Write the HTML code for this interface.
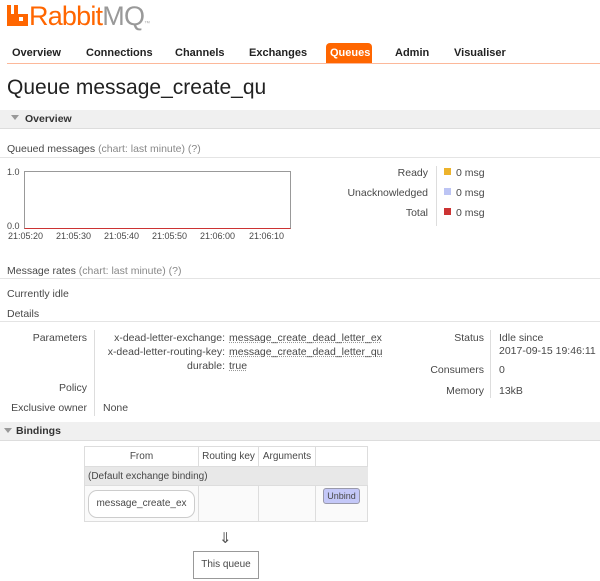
<!DOCTYPE html>
<html><head><meta charset="utf-8"><style>
body{margin:0;width:600px;height:581px;background:#fff;font-family:"Liberation Sans","DejaVu Sans",sans-serif;color:#484848;position:relative;overflow:hidden;font-size:10.5px}
.a{position:absolute;white-space:nowrap}
.r{text-align:right}
.nav{font-weight:bold;font-size:11px;color:#222}
.g{color:#888}
.hb{position:absolute;left:0;width:600px;height:18px;background:#f0f0f0;border-bottom:1px solid #ddd;font-weight:bold;color:#333}
.hl{position:absolute;left:0;width:600px;height:1px;background:#e4e4e4}
.u{text-decoration:underline dotted #999}
.t{font-size:9px;top:231px}
td,th{border:1px solid #ddd;font-weight:normal;padding:0;font-size:10px;color:#484848}
</style></head><body>
<svg class="a" style="left:7px;top:5px" width="21" height="21" viewBox="0 0 21 21"><path d="M0 0h4v9h3V0h4v9h10v12H0z" fill="#f60"/><rect x="12" y="12" width="4" height="4" fill="#fff"/></svg>
<div class="a" style="left:29px;top:1px;font-size:27px;letter-spacing:-0.8px;color:#f60;font-weight:300">Rabbit<span style="color:#999">MQ</span><span style="font-size:6px;color:#aaa">™</span></div>

<div class="a nav" style="left:12px;top:47px">Overview</div>
<div class="a nav" style="left:86px;top:47px">Connections</div>
<div class="a nav" style="left:175px;top:47px">Channels</div>
<div class="a nav" style="left:249px;top:47px">Exchanges</div>
<div class="a" style="left:326px;top:43px;width:46px;height:20px;background:#f60;border-radius:4px 4px 0 0"></div>
<div class="a nav" style="left:330px;top:47px;color:#fff">Queues</div>
<div class="a nav" style="left:395px;top:47px">Admin</div>
<div class="a nav" style="left:454px;top:47px">Visualiser</div>
<div class="a" style="left:7px;top:63px;width:593px;height:1px;background:#fcb89a"></div>

<div class="a" style="left:7px;top:76px;font-size:21px;color:#222">Queue message_create_qu</div>

<div class="hb" style="top:110px"></div>
<div class="a" style="left:11px;top:115px;width:0;height:0;border-left:4px solid transparent;border-right:4px solid transparent;border-top:5px solid #999"></div>
<div class="a" style="left:25px;top:113px;font-weight:bold;color:#333">Overview</div>

<div class="a" style="left:7px;top:143px">Queued messages <span class="g">(chart: last minute) (?)</span></div>
<div class="hl" style="top:157px"></div>

<div class="a" style="left:7px;top:167px;font-size:9px">1.0</div>
<div class="a" style="left:7px;top:221px;font-size:9px">0.0</div>
<div class="a" style="left:24px;top:171px;width:265px;height:56px;border:1px solid #999;border-bottom:1px solid #c33"></div>
<div class="a t" style="left:8px">21:05:20</div>
<div class="a t" style="left:56px">21:05:30</div>
<div class="a t" style="left:104px">21:05:40</div>
<div class="a t" style="left:152px">21:05:50</div>
<div class="a t" style="left:200px">21:06:00</div>
<div class="a t" style="left:249px">21:06:10</div>

<div class="a r" style="left:300px;width:128px;top:167px">Ready</div>
<div class="a r" style="left:300px;width:128px;top:187px">Unacknowledged</div>
<div class="a r" style="left:300px;width:128px;top:207px">Total</div>
<div class="a" style="left:436px;top:166px;width:1px;height:60px;background:#ddd"></div>
<div class="a" style="left:444px;top:168px;width:7px;height:7px;background:#edb32b"></div>
<div class="a" style="left:444px;top:188px;width:7px;height:7px;background:#bcc4f4"></div>
<div class="a" style="left:444px;top:208px;width:7px;height:7px;background:#c33"></div>
<div class="a" style="left:456px;top:167px">0 msg</div>
<div class="a" style="left:456px;top:187px">0 msg</div>
<div class="a" style="left:456px;top:207px">0 msg</div>

<div class="a" style="left:7px;top:265px">Message rates <span class="g">(chart: last minute) (?)</span></div>
<div class="hl" style="top:278px"></div>
<div class="a" style="left:7px;top:288px">Currently idle</div>
<div class="a" style="left:7px;top:308px">Details</div>
<div class="hl" style="top:321px"></div>

<div class="a r" style="left:0;width:87px;top:332px">Parameters</div>
<div class="a r" style="left:0;width:87px;top:382px">Policy</div>
<div class="a r" style="left:0;width:87px;top:402px">Exclusive owner</div>
<div class="a" style="left:94px;top:330px;width:1px;height:86px;background:#ddd"></div>
<div class="a r" style="left:95px;width:130px;top:332px">x-dead-letter-exchange:</div>
<div class="a r" style="left:95px;width:130px;top:346px">x-dead-letter-routing-key:</div>
<div class="a r" style="left:95px;width:130px;top:360px">durable:</div>
<div class="a u" style="left:229px;top:332px">message_create_dead_letter_ex</div>
<div class="a u" style="left:229px;top:346px">message_create_dead_letter_qu</div>
<div class="a u" style="left:229px;top:360px">true</div>
<div class="a" style="left:103px;top:402px">None</div>

<div class="a r" style="left:400px;width:84px;top:332px">Status</div>
<div class="a r" style="left:400px;width:84px;top:364px">Consumers</div>
<div class="a r" style="left:400px;width:84px;top:385px">Memory</div>
<div class="a" style="left:490px;top:330px;width:1px;height:68px;background:#ddd"></div>
<div class="a" style="left:499px;top:332px">Idle since</div>
<div class="a" style="left:499px;top:345px">2017-09-15 19:46:11</div>
<div class="a" style="left:499px;top:364px">0</div>
<div class="a" style="left:499px;top:385px">13kB</div>

<div class="hb" style="top:422px"></div>
<div class="a" style="left:4px;top:428px;width:0;height:0;border-left:4px solid transparent;border-right:4px solid transparent;border-top:5px solid #999"></div>
<div class="a" style="left:16px;top:425px;font-weight:bold;color:#333">Bindings</div>

<table class="a" style="left:84px;top:446px;border-collapse:collapse;width:284px">
<tr style="height:20px"><th style="width:113px">From</th><th style="width:59px">Routing key</th><th style="width:56px">Arguments</th><th></th></tr>
<tr style="height:19px;background:#e8e8e8"><td colspan="4" style="text-align:left;padding-left:3px;border-right-color:#e8e8e8">(Default exchange binding)</td></tr>
<tr style="height:36px;background:#fafafa"><td><div style="margin:2px 3px;height:26px;border:1px solid #ccc;border-radius:9px;background:#fff;line-height:26px;text-align:center">message_create_ex</div></td><td></td><td></td><td style="vertical-align:top;text-align:center;padding-top:2px"><span style="display:inline-block;background:#c4c8f8;border:1px solid #99a;border-radius:3px;padding:2px 3px;font-size:9px">Unbind</span></td></tr>
</table>
<div class="a" style="left:219px;top:529px;font-size:15px;color:#555">⇓</div>
<div class="a" style="left:193px;top:551px;width:64px;height:26px;border:1px solid #999;text-align:center;line-height:26px;font-size:10px">This queue</div>
</body></html>
